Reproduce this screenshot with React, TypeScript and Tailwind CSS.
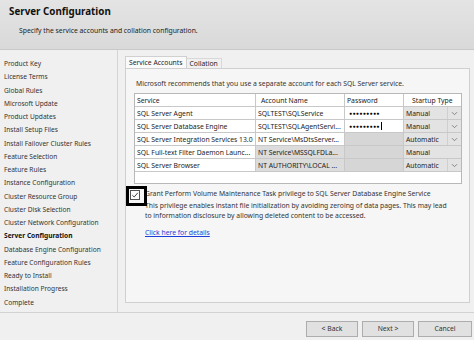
import React from "react";

const steps = [
  "Product Key",
  "License Terms",
  "Global Rules",
  "Microsoft Update",
  "Product Updates",
  "Install Setup Files",
  "Install Failover Cluster Rules",
  "Feature Selection",
  "Feature Rules",
  "Instance Configuration",
  "Cluster Resource Group",
  "Cluster Disk Selection",
  "Cluster Network Configuration",
  "Server Configuration",
  "Database Engine Configuration",
  "Feature Configuration Rules",
  "Ready to Install",
  "Installation Progress",
  "Complete",
];

type Row = {
  service: string;
  account: string;
  accountGray?: boolean;
  password: boolean;
  cursor?: boolean;
  startup: string;
  arrow: boolean;
};

const rows: Row[] = [
  { service: "SQL Server Agent", account: "SQLTEST\\SQLService", password: true, startup: "Manual", arrow: true },
  { service: "SQL Server Database Engine", account: "SQLTEST\\SQLAgentServi...", password: true, cursor: true, startup: "Manual", arrow: true },
  { service: "SQL Server Integration Services 13.0", account: "NT Service\\MsDtsServer...", password: false, startup: "Automatic", arrow: true },
  { service: "SQL Full-text Filter Daemon Launc...", account: "NT Service\\MSSQLFDLa...", accountGray: true, password: false, startup: "Manual", arrow: false },
  { service: "SQL Server Browser", account: "NT AUTHORITY\\LOCAL ...", accountGray: true, password: false, startup: "Automatic", arrow: true },
];

function Chevron() {
  return (
    <svg width="7" height="5" viewBox="0 0 7 5" className="text-[#7a7a7a]">
      <path d="M1 1.2 L3.5 3.7 L6 1.2" fill="none" stroke="currentColor" strokeWidth="0.9" />
    </svg>
  );
}

export default function App() {
  const font = { fontFamily: '"Noto Sans", "Open Sans", sans-serif' };
  return (
    <div className="w-[474px] h-[340px] flex flex-col bg-[#f0f0f0] text-[#1e1e1e] overflow-hidden" style={font}>
      {/* header */}
      <div className="h-[50px] shrink-0 bg-gradient-to-b from-[#e4e4e4] to-[#d9d9d9] border-b border-[#c8c8c8] pl-[9px] pt-[5px]">
        <div className="text-[9.8px] font-bold leading-[14px] text-[#111]">Server Configuration</div>
        <div className="pl-[10px] pt-[7px] text-[6.8px] leading-[10px] text-[#222]">
          Specify the service accounts and collation configuration.
        </div>
      </div>

      <div className="h-[263px] shrink-0 flex border-b border-[#d2d2d2]">
        {/* left nav */}
        <div className="w-[118px] shrink-0 border-r border-[#d4d4d4] pt-[7px] pl-[4px] flex flex-col">
          {steps.map((s) => (
            <div
              key={s}
              className={`h-[13.25px] text-[6.6px] leading-[13px] whitespace-nowrap ${
                s === "Server Configuration" ? "font-bold text-[#111]" : "text-[#333]"
              }`}
            >
              {s}
            </div>
          ))}
        </div>

        {/* right content */}
        <div className="flex-1 pl-[7px] pr-[4px] pt-[7px] pb-[9px] flex flex-col">
          <div className="flex items-end h-[11px] text-[6.8px]">
            <div className="h-[12px] px-[3px] bg-[#fafafa] border border-b-0 border-[#d0d0d0] leading-[11px] relative z-10">
              Service Accounts
            </div>
            <div className="h-[10px] px-[3px] leading-[10px] border-t border-r border-[#d8d8d8]">Collation</div>
          </div>
          <div className="flex-1 bg-[#f6f6f6] border border-[#d0d0d0] pl-[8px] pr-[7px] pt-[10px] flex flex-col">
            <div className="text-[6.8px] leading-[10px] pl-[2px] text-[#333]">
              Microsoft recommends that you use a separate account for each SQL Server service.
            </div>
            <div className="mt-[4px] h-[91px] bg-white border border-[#b8b8b8]">
              <div className="grid grid-cols-[120px_89px_59px_1fr] text-[6.8px] text-[#222]">
                {["Service", "Account Name", "Password", "Startup Type"].map((h, i) => (
                  <div
                    key={h}
                    className={`h-[13px] leading-[13px] border-b border-[#c8c8c8] whitespace-nowrap ${i > 0 ? "border-l" : ""} ${
                      i === 3 ? "pl-[8px]" : i === 1 ? "pl-[5px]" : "pl-[2px]"
                    }`}
                  >
                    {h}
                  </div>
                ))}
                {rows.map((r) => (
                  <React.Fragment key={r.service}>
                    <div className="h-[13px] leading-[13px] pl-[2px] border-b border-[#c8c8c8] whitespace-nowrap overflow-hidden">
                      {r.service}
                    </div>
                    <div
                      className={`h-[13px] leading-[13px] pl-[2px] border-b border-l border-[#c8c8c8] whitespace-nowrap overflow-hidden ${
                        r.accountGray ? "bg-[#dcdcdc]" : ""
                      }`}
                    >
                      {r.account}
                    </div>
                    <div
                      className={`h-[13px] leading-[13px] pl-[4px] border-b border-l border-[#c8c8c8] flex items-center ${
                        r.password ? "" : "bg-[#d6d6d6]"
                      }`}
                    >
                      {r.password && (
                        <span className="text-[5px] tracking-[0.4px] text-black">●●●●●●●●●</span>
                      )}
                      {r.cursor && <span className="w-px h-[8px] bg-black ml-[1px]" />}
                    </div>
                    <div className="h-[13px] border-b border-l border-[#c8c8c8] bg-[#e3e3e3] flex items-center">
                      <span className="flex-1 pl-[2px] leading-[13px]">{r.startup}</span>
                      {r.arrow && (
                        <span className="w-[14px] h-full border-l border-[#cfcfcf] flex items-center justify-center">
                          <Chevron />
                        </span>
                      )}
                    </div>
                  </React.Fragment>
                ))}
              </div>
            </div>

            <div className="mt-[2px] -ml-[8px] flex items-start relative">
              <div className="absolute left-[0px] top-[0px] w-[21px] h-[20px] border-[3px] border-black z-10" />
              <div className="mt-[4px] ml-[4px] w-[10px] h-[10px] border border-[#555] bg-white flex items-center justify-center">
                <svg width="8" height="8" viewBox="0 0 8 8">
                  <path d="M1.3 4.2 L3.2 6 L6.8 1.8" fill="none" stroke="#333" strokeWidth="0.9" />
                </svg>
              </div>
              <div className="ml-[5px] mt-[3px] text-[6.8px] leading-[10px] text-[#333] whitespace-nowrap">
                Grant Perform Volume Maintenance Task privilege to SQL Server Database Engine Service
              </div>
            </div>
            <div className="pl-[11px] pt-[1px] text-[6.8px] leading-[10px] text-[#333] whitespace-nowrap">
              This privilege enables instant file initialization by avoiding zeroing of data pages. This may lead
              <br />
              to information disclosure by allowing deleted content to be accessed.
            </div>
            <div className="pl-[11px] pt-[7px] text-[6.8px] leading-[10px] text-[#1a3fd8] underline">
              Click here for details
            </div>
          </div>
        </div>
      </div>

      {/* footer */}
      <div className="flex-1 flex items-start justify-end pt-[8px] pr-[2px] gap-[4px] text-[6.8px] text-[#333]">
        <button className="w-[52px] h-[16px] border border-[#adadad] bg-[#e1e1e1]">&lt; Back</button>
        <button className="w-[52px] h-[16px] border border-[#adadad] bg-[#e1e1e1]">Next &gt;</button>
        <button className="w-[54px] h-[16px] border border-[#adadad] bg-[#e1e1e1]">Cancel</button>
      </div>
    </div>
  );
}
